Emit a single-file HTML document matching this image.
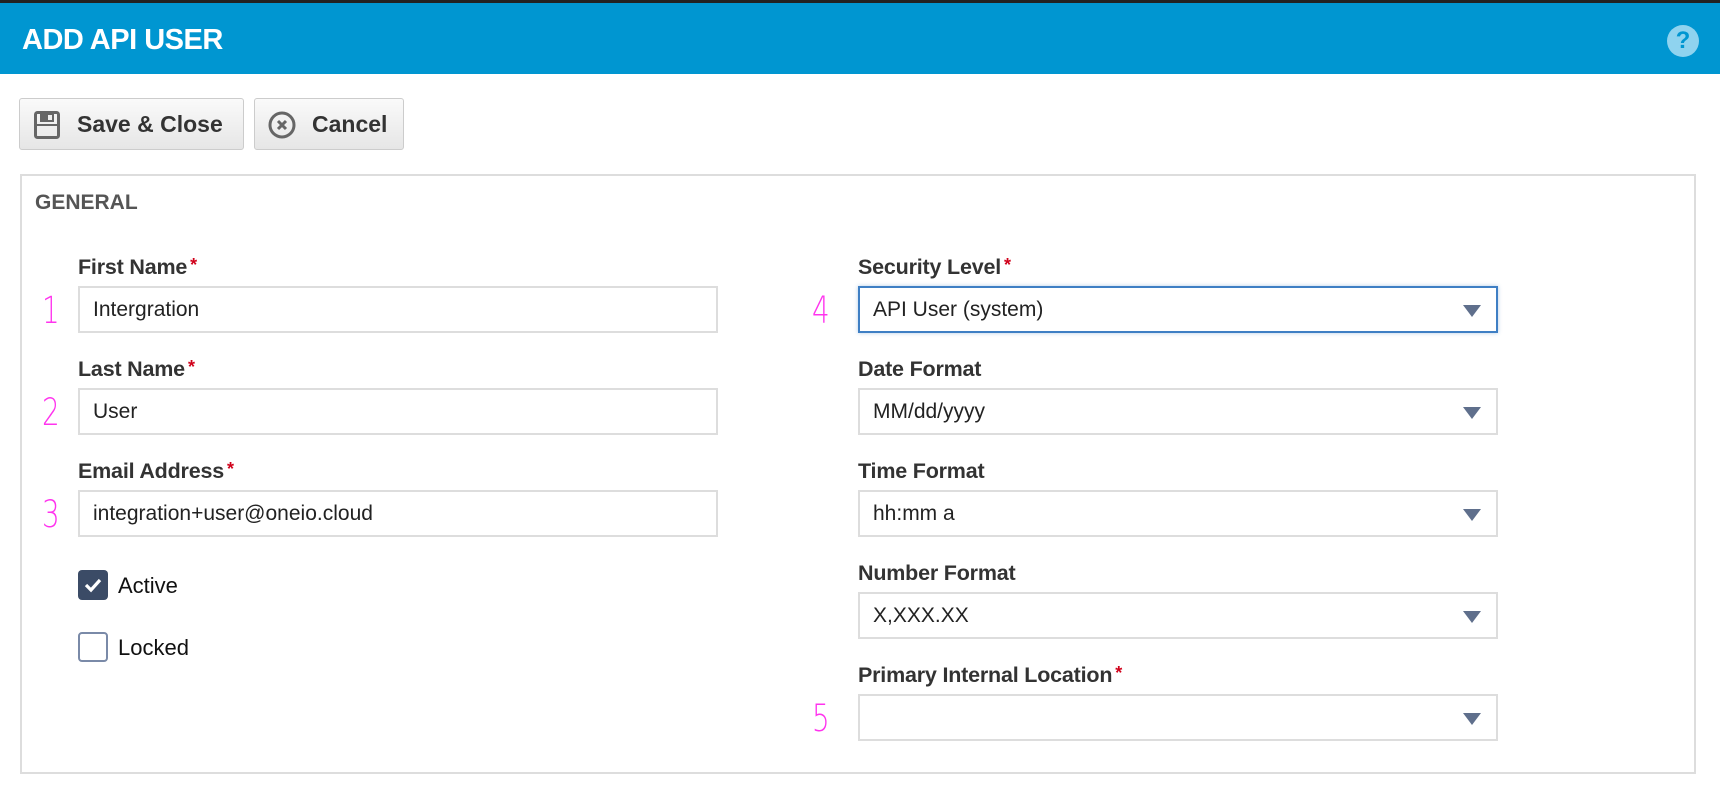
<!DOCTYPE html>
<html><head><meta charset="utf-8"><style>
*{box-sizing:border-box;margin:0;padding:0}
body{width:1720px;height:788px;background:#fff;font-family:"Liberation Sans",Arial,sans-serif;position:relative;overflow:hidden}
.hdr{position:absolute;left:0;top:0;width:1720px;height:74px;background:#0096d1;border-top:3px solid #222}
.hdr h1{position:absolute;left:22px;top:21px;font-size:29px;font-weight:bold;color:#fff;letter-spacing:-0.5px}
.help{position:absolute;left:1667px;top:22px;width:32px;height:32px;border-radius:50%;background:#8fd3ef;color:#0096d1;font-weight:bold;font-size:24px;text-align:center;line-height:32px}
.btn{position:absolute;top:98px;height:52px;border:1px solid #ccc;border-radius:3px;background:linear-gradient(#fafafa,#e6e6e6);font-weight:bold;font-size:23px;color:#333;line-height:50px}
.panel{position:absolute;left:20px;top:174px;width:1676px;height:600px;border:2px solid #ddd}
.gen{position:absolute;left:35px;top:191px;font-size:21px;font-weight:bold;color:#555}
.lbl{position:absolute;font-size:21.5px;font-weight:bold;color:#333;letter-spacing:-0.2px}
.lbl b{color:#d0021b;font-size:18px;vertical-align:top;margin-left:3px}
.inp{position:absolute;height:47px;border:2px solid #ddd;background:#fff;font-size:21px;color:#222;padding-left:13px;line-height:43px}
.sel::after{content:"";position:absolute;right:15px;top:17px;border-left:9px solid transparent;border-right:9px solid transparent;border-top:12px solid #5f6f8c}
.num{position:absolute;color:#ff33ee;font-size:37px;font-family:"DejaVu Sans",sans-serif;font-weight:200;transform:scaleX(.75);transform-origin:left}
.cb{position:absolute;left:78px;width:30px;height:30px;border-radius:4px}
.cbt{position:absolute;left:118px;font-size:22px;color:#111}
</style></head><body>
<div class="hdr"><h1>ADD API USER</h1><div class="help">?</div></div>
<div class="btn" style="left:19px;width:225px">
<svg style="position:absolute;left:14px;top:12px" width="26" height="28" viewBox="0 0 26 28"><rect x="1.5" y="1.5" width="23" height="25" rx="2" fill="none" stroke="#666" stroke-width="3"/><rect x="6" y="3" width="14" height="8" fill="#666"/><rect x="14" y="4" width="4" height="5" fill="#eee"/><rect x="3" y="13" width="20" height="2" fill="#666"/></svg>
<span style="position:absolute;left:57px">Save &amp; Close</span></div>
<div class="btn" style="left:254px;width:150px">
<svg style="position:absolute;left:13px;top:12px" width="28" height="28" viewBox="0 0 28 28"><circle cx="14" cy="14" r="12" fill="none" stroke="#666" stroke-width="3"/><path d="M10 10l8 8M18 10l-8 8" stroke="#666" stroke-width="3"/></svg>
<span style="position:absolute;left:57px">Cancel</span></div>
<div class="panel"></div>
<div class="gen">GENERAL</div>

<div class="lbl" style="left:78px;top:255px">First Name<b>*</b></div>
<div class="num" style="left:42px;top:289px">1</div>
<div class="inp" style="left:78px;top:286px;width:640px">Intergration</div>
<div class="lbl" style="left:78px;top:357px">Last Name<b>*</b></div>
<div class="num" style="left:42px;top:391px">2</div>
<div class="inp" style="left:78px;top:388px;width:640px">User</div>
<div class="lbl" style="left:78px;top:459px">Email Address<b>*</b></div>
<div class="num" style="left:42px;top:493px">3</div>
<div class="inp" style="left:78px;top:490px;width:640px">integration+user@oneio.cloud</div>

<div class="cb" style="top:570px;background:#3b4b66"><svg width="30" height="30"><path d="M8 15l5 5 9-10" fill="none" stroke="#fff" stroke-width="3.2"/></svg></div>
<div class="cbt" style="top:573px">Active</div>
<div class="cb" style="top:632px;border:2px solid #7a8aa8;background:#fff"></div>
<div class="cbt" style="top:635px">Locked</div>

<div class="lbl" style="left:858px;top:255px">Security Level<b>*</b></div>
<div class="num" style="left:812px;top:289px">4</div>
<div class="inp sel" style="left:858px;top:286px;width:640px;border-color:#3f7fc4;box-shadow:0 0 4px rgba(63,127,196,.4)">API User (system)</div>
<div class="lbl" style="left:858px;top:357px">Date Format</div>
<div class="inp sel" style="left:858px;top:388px;width:640px">MM/dd/yyyy</div>
<div class="lbl" style="left:858px;top:459px">Time Format</div>
<div class="inp sel" style="left:858px;top:490px;width:640px">hh:mm a</div>
<div class="lbl" style="left:858px;top:561px">Number Format</div>
<div class="inp sel" style="left:858px;top:592px;width:640px">X,XXX.XX</div>
<div class="lbl" style="left:858px;top:663px">Primary Internal Location<b>*</b></div>
<div class="num" style="left:812px;top:697px">5</div>
<div class="inp sel" style="left:858px;top:694px;width:640px"></div>
</body></html>
